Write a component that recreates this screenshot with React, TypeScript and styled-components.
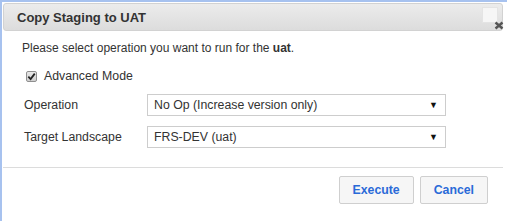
import { FC } from "react";
import styled, { createGlobalStyle } from "styled-components";

const GlobalStyle = createGlobalStyle`
  html, body {
    margin: 0;
    padding: 0;
    background: #fff;
  }
  body {
    font-family: "Liberation Sans", Arial, sans-serif;
    font-size: 12.3px;
    color: #333;
  }
`;

/**
 * Copy dialog.
 */
const App: FC = () => {
  return (
    <>
      <GlobalStyle />
      <Frame>
        <TitleBar>
          <Title>Copy Staging to UAT</Title>
          <CloseBox />
          <CloseIcon viewBox="0 0 10 9">
            <path d="M1.5 1.5 L8.5 7.5 M8.5 1.5 L1.5 7.5" stroke="#555" strokeWidth="2.4" />
          </CloseIcon>
        </TitleBar>
        <Body>
          <Intro>
            Please select operation you want to run for the <b>uat</b>.
          </Intro>
          <CheckRow>
            <CheckBox>
              <svg viewBox="0 0 10 10" width="9" height="9">
                <path d="M1.5 5.2 L4 7.8 L8.6 1.8" fill="none" stroke="#222" strokeWidth="2" />
              </svg>
            </CheckBox>
            <span>Advanced Mode</span>
          </CheckRow>
          <Form>
            <Label>Operation</Label>
            <SelectBox>
              <span>No Op (Increase version only)</span>
              <Arrow>▼</Arrow>
            </SelectBox>
            <Label>Target Landscape</Label>
            <SelectBox>
              <span>FRS-DEV (uat)</span>
              <Arrow>▼</Arrow>
            </SelectBox>
          </Form>
        </Body>
        <Footer>
          <Button>Execute</Button>
          <Button>Cancel</Button>
        </Footer>
      </Frame>
    </>
  );
};

export default App;

const Frame = styled.div`
  height: 219px;
  border-top: 2px solid #a7c2ef;
  border-left: 2px solid #a7c2ef;
  padding: 1px 4px 0 1px;
  display: flex;
  flex-direction: column;
`;

const TitleBar = styled.div`
  position: relative;
  height: 26px;
  border: 1px solid #d2d2d2;
  border-radius: 3px;
  background: linear-gradient(#ececec, #dcdcdc);
  display: flex;
  align-items: center;
  padding-left: 13px;
`;

const Title = styled.div`
  font-weight: bold;
  font-size: 13px;
  color: #333;
`;

const CloseBox = styled.div`
  position: absolute;
  right: 4px;
  top: 3px;
  width: 16px;
  height: 16px;
  background: #f6f6f6;
  border: 1px solid #e4e4e4;
  box-sizing: border-box;
`;

const CloseIcon = styled.svg`
  position: absolute;
  right: -2px;
  top: 17px;
  width: 10px;
  height: 9px;
`;

const Body = styled.div`
  padding: 9px 0 0 19px;
`;

const Intro = styled.div`
  line-height: 16px;
  font-size: 12px;
  b {
    font-weight: bold;
  }
`;

const CheckRow = styled.div`
  display: flex;
  align-items: center;
  gap: 7px;
  margin-top: 13px;
  padding-left: 4px;
  height: 14px;
`;

const CheckBox = styled.span`
  width: 11px;
  height: 11px;
  box-sizing: border-box;
  border: 1px solid #8f8f8f;
  border-radius: 2px;
  background: linear-gradient(#e8e8e8, #cfcfcf);
  display: flex;
  align-items: center;
  justify-content: center;
`;

const Form = styled.div`
  display: grid;
  grid-template-columns: 123px 299px;
  row-gap: 10px;
  align-items: center;
  margin-top: 11px;
  padding-left: 2px;
`;

const Label = styled.div`
  color: #333;
`;

const SelectBox = styled.div`
  height: 22px;
  box-sizing: border-box;
  border: 1px solid #cdcdcd;
  background: #fff;
  display: flex;
  align-items: center;
  justify-content: space-between;
  padding: 0 7px 0 6px;
  color: #333;
`;

const Arrow = styled.span`
  font-size: 9px;
  color: #111;
`;

const Footer = styled.div`
  margin-top: 19px;
  border-top: 1px solid #dcdcdc;
  display: flex;
  justify-content: flex-end;
  gap: 6px;
  padding: 8px 15px 0 0;
`;

const Button = styled.button`
  height: 28px;
  padding: 0 13px;
  border: 1px solid #cfcfcf;
  border-radius: 2px;
  background: #f6f6f6;
  font-family: "Liberation Sans", Arial, sans-serif;
  font-size: 12.3px;
  font-weight: bold;
  color: #2a6ad8;
  cursor: pointer;
`;
